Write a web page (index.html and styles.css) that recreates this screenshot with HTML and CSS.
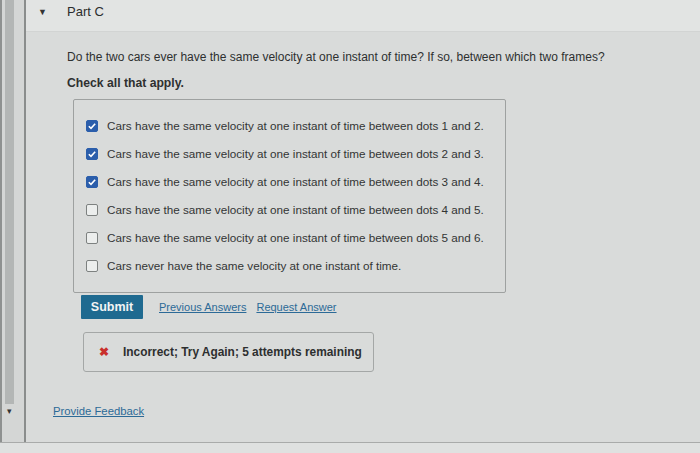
FILE: index.html
```html
<!DOCTYPE html>
<html lang="en">
  <head>
    <meta charset="UTF-8" />
    <meta name="viewport" content="width=device-width, initial-scale=1.0" />
    <link rel="stylesheet" href="styles.css">
  </head>
  <body>
    <div class="page">
      <div class="gutter">
        <div class="scrollbar">
          <div class="thumb"></div>
          <div class="arrow">&#9662;</div>
        </div>
      </div>
      <div class="main">
        <div class="part-header">
          <span class="caret">&#9660;</span>
          <span class="part-title">Part C</span>
        </div>
        <div class="content">
          <p class="question">Do the two cars ever have the same velocity at one instant of time? If so, between which two frames?</p>
          <p class="instruction">Check all that apply.</p>

          <div class="choices">
            <label class="choice checked"><span class="box"><svg viewBox="0 0 12 12" width="10" height="10"><path d="M2.2 6.3 L4.8 8.8 L9.8 3.2" fill="none" stroke="#fff" stroke-width="1.9"/></svg></span>Cars have the same velocity at one instant of time between dots 1 and 2.</label>
            <label class="choice checked"><span class="box"><svg viewBox="0 0 12 12" width="10" height="10"><path d="M2.2 6.3 L4.8 8.8 L9.8 3.2" fill="none" stroke="#fff" stroke-width="1.9"/></svg></span>Cars have the same velocity at one instant of time between dots 2 and 3.</label>
            <label class="choice checked"><span class="box"><svg viewBox="0 0 12 12" width="10" height="10"><path d="M2.2 6.3 L4.8 8.8 L9.8 3.2" fill="none" stroke="#fff" stroke-width="1.9"/></svg></span>Cars have the same velocity at one instant of time between dots 3 and 4.</label>
            <label class="choice"><span class="box"></span>Cars have the same velocity at one instant of time between dots 4 and 5.</label>
            <label class="choice"><span class="box"></span>Cars have the same velocity at one instant of time between dots 5 and 6.</label>
            <label class="choice"><span class="box"></span>Cars never have the same velocity at one instant of time.</label>
          </div>

          <div class="actions">
            <button class="submit">Submit</button>
            <a class="link" href="#">Previous Answers</a>
            <a class="link" href="#">Request Answer</a>
          </div>

          <div class="feedback">
            <span class="cross">&#10006;</span>
            <span>Incorrect; Try Again; 5 attempts remaining</span>
          </div>
        </div>
        <a class="link provide" href="#">Provide Feedback</a>
      </div>
    </div>
    <div class="bottom"></div>
  </body>
</html>
```

FILE: styles.css
```css
* {
  box-sizing: border-box;
}

body {
  margin: 0;
  font-family: Arial, "Liberation Sans", sans-serif;
  background-color: #d9dbda;
  color: #2e3030;
  width: 700px;
  height: 453px;
  overflow: hidden;
}

.page {
  display: flex;
  height: 442px;
}

.gutter {
  width: 26px;
  border-left: 2px solid #8e9190;
  border-right: 2px solid #8a8d8c;
  padding: 0 0 0 3px;
  background-color: #d4d6d5;
}

.scrollbar {
  width: 9px;
  display: flex;
  flex-direction: column;
  align-items: center;
}

.thumb {
  width: 9px;
  height: 404px;
  background-color: #b3b6b5;
}

.arrow {
  font-size: 9px;
  color: #333;
  margin-top: 2px;
}

.main {
  flex: 1;
  display: flex;
  flex-direction: column;
}

.part-header {
  height: 32px;
  background-color: #e2e4e3;
  display: flex;
  align-items: flex-start;
  padding: 4px 0 0 12px;
  border-bottom: 1px solid #d2d4d3;
}

.caret {
  font-size: 9px;
  line-height: 16px;
  color: #333;
  width: 29px;
}

.part-title {
  font-size: 13px;
  line-height: 16px;
  color: #2b2d2d;
}

.content {
  padding-left: 41px;
}

.question {
  margin: 18px 0 0 0;
  font-size: 12px;
  line-height: 15px;
}

.instruction {
  margin: 11px 0 0 0;
  font-size: 12.2px;
  font-weight: bold;
  line-height: 15px;
}

.choices {
  width: 433px;
  margin: 8px 0 0 6px;
  border: 1px solid #9ea1a0;
  border-radius: 2px;
  padding: 18px 0 18px 12px;
  display: flex;
  flex-direction: column;
  gap: 12px;
}

.choice {
  display: flex;
  align-items: center;
  font-size: 11.7px;
  line-height: 16px;
  color: #333535;
}

.box {
  width: 12px;
  height: 12px;
  margin-right: 9px;
  border: 1px solid #7d8180;
  border-radius: 2px;
  background-color: #eceeed;
  display: flex;
  align-items: center;
  justify-content: center;
}

.choice.checked .box {
  background-color: #2b5eab;
  border-color: #2b5eab;
}

.actions {
  display: flex;
  align-items: center;
  margin: 2px 0 0 14px;
  gap: 16px;
}

.submit {
  background-color: #1f6a90;
  color: #f2f4f4;
  border: none;
  border-radius: 1px;
  font-family: inherit;
  font-size: 12.5px;
  font-weight: bold;
  width: 62px;
  height: 24px;
  padding: 0;
}

.link {
  color: #2c6a97;
  font-size: 11px;
  text-decoration: underline;
}

.actions .link + .link {
  margin-left: -6px;
}

.feedback {
  width: 291px;
  height: 40px;
  margin: 13px 0 0 16px;
  border: 1px solid #a4a7a6;
  border-radius: 3px;
  display: flex;
  align-items: center;
  padding-left: 15px;
  font-size: 11.9px;
  font-weight: bold;
  color: #2d2f2f;
}

.cross {
  color: #c9302c;
  font-size: 12px;
  margin-right: 14px;
}

.provide {
  margin: 33px 0 0 27px;
  font-size: 11.3px;
}

.bottom {
  height: 11px;
  border-top: 1px solid #a9abaa;
  background-color: #dfe1e0;
}
```
